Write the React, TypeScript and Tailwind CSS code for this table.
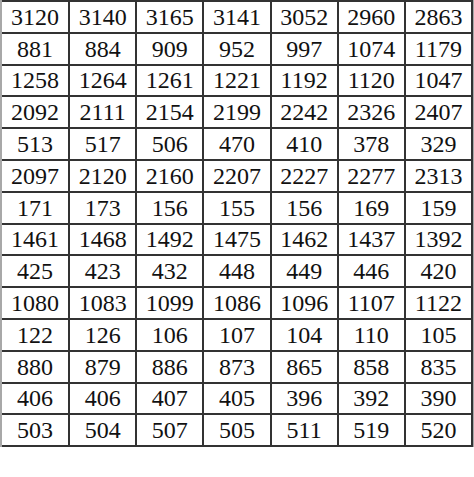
const rows: number[][] = [
  [3120, 3140, 3165, 3141, 3052, 2960, 2863],
  [881, 884, 909, 952, 997, 1074, 1179],
  [1258, 1264, 1261, 1221, 1192, 1120, 1047],
  [2092, 2111, 2154, 2199, 2242, 2326, 2407],
  [513, 517, 506, 470, 410, 378, 329],
  [2097, 2120, 2160, 2207, 2227, 2277, 2313],
  [171, 173, 156, 155, 156, 169, 159],
  [1461, 1468, 1492, 1475, 1462, 1437, 1392],
  [425, 423, 432, 448, 449, 446, 420],
  [1080, 1083, 1099, 1086, 1096, 1107, 1122],
  [122, 126, 106, 107, 104, 110, 105],
  [880, 879, 886, 873, 865, 858, 835],
  [406, 406, 407, 405, 396, 392, 390],
  [503, 504, 507, 505, 511, 519, 520],
];

export default function App() {
  return (
    <div className="w-[474px] h-[477px] bg-white">
      <div className="w-[474px] border-l-2 border-r border-[#a8a8a8]">
        <table className="w-full table-fixed border-collapse font-['Liberation_Serif',serif] text-[24px] text-[#111]">
          <tbody>
            {rows.map((r, i) => (
              <tr key={i} className="h-[31.8px]">
                {r.map((v, j) => (
                  <td
                    key={j}
                    className="border-2 border-[#333] first:border-l-0 p-0 text-center leading-none align-middle"
                  >
                    {v}
                  </td>
                ))}
              </tr>
            ))}
          </tbody>
        </table>
      </div>
    </div>
  );
}
